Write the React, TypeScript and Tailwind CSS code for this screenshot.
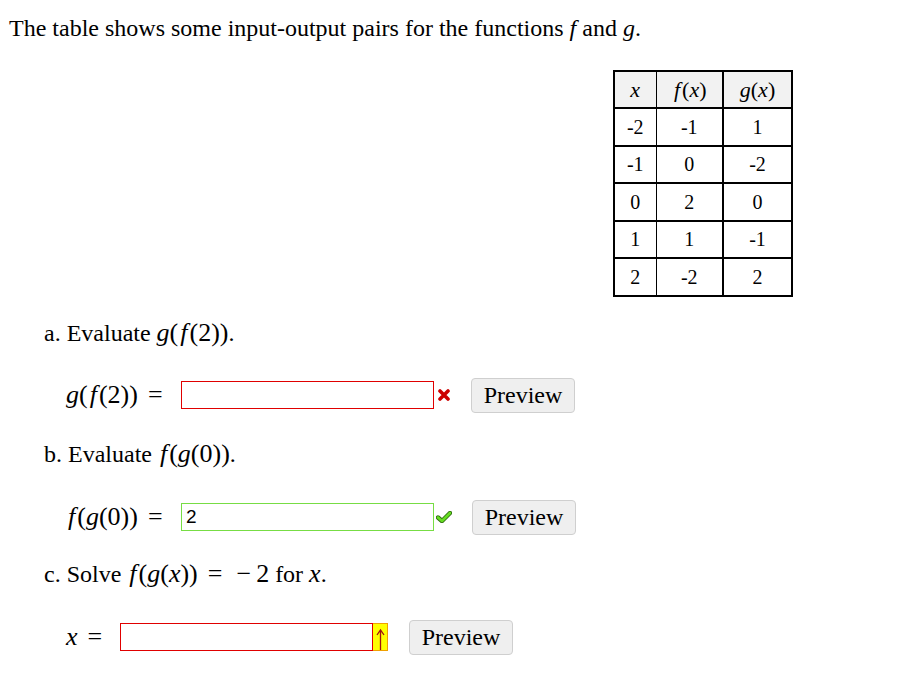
import React from 'react';

const serif = { fontFamily: '"Liberation Serif", "Times New Roman", serif' };
const sans = { fontFamily: '"Liberation Sans", Arial, sans-serif' };

// italic math variable
const V = ({ children }: { children: React.ReactNode }) => (
  <span className="italic">{children}</span>
);

// italic f with a bit of room, like TeX's f
const F = () => <span className="italic mx-[2px]">f</span>;

// inline math is set a touch larger than the text around it
const M = ({ children }: { children: React.ReactNode }) => (
  <span className="text-[26px] leading-none">{children}</span>
);

const rows = [
  ['-2', '-1', '1'],
  ['-1', '0', '-2'],
  ['0', '2', '0'],
  ['1', '1', '-1'],
  ['2', '-2', '2'],
];

function Cross() {
  return (
    <svg width="12" height="12" viewBox="0 0 12 12" className="shrink-0">
      <path d="M2 2 L10 10 M10 2 L2 10" stroke="#cc0000" strokeWidth="3.6" strokeLinecap="round" />
    </svg>
  );
}

function Check() {
  return (
    <svg width="16" height="12" viewBox="0 0 16 12" className="shrink-0">
      <path d="M2 6.5 L6 10 L14 2" fill="none" stroke="#2d6a0f" strokeWidth="4.4" strokeLinecap="round" strokeLinejoin="round" />
      <path d="M2 6.5 L6 10 L14 2" fill="none" stroke="#66dd22" strokeWidth="2.6" strokeLinecap="round" strokeLinejoin="round" />
    </svg>
  );
}

function PreviewButton({ ml }: { ml: string }) {
  return (
    <button
      className={`${ml} h-[35px] w-[104px] rounded-[4px] border border-[#cfcfcf] bg-[#efefef] text-[24px] text-black leading-none`}
      style={serif}
    >
      Preview
    </button>
  );
}

export default function App() {
  return (
    <div className="min-h-screen bg-white text-black text-[24px]" style={serif}>
      <p className="pl-[9px] pt-[13px] leading-[30px]">
        The table shows some input-output pairs for the functions <V>f</V> and <V>g</V>.
      </p>

      <div className="flex justify-end pr-[121px] mt-[27px]">
        <table className="border-collapse border-2 border-black text-[20px] text-center">
          <thead>
            <tr className="bg-[#f2f2f2] h-[37px] text-[22px]">
              <th className="font-normal w-[42px] border-r border-black"><V>x</V></th>
              <th className="font-normal w-[67px] border-r-2 border-black"><F />(<V>x</V>)</th>
              <th className="font-normal w-[69px]"><V>g</V>(<V>x</V>)</th>
            </tr>
          </thead>
          <tbody>
            {rows.map((r, i) => (
              <tr key={i} className="h-[37.5px] border-t-2 border-black">
                <td className="border-r border-black">{r[0]}</td>
                <td className="border-r-2 border-black">{r[1]}</td>
                <td>{r[2]}</td>
              </tr>
            ))}
          </tbody>
        </table>
      </div>

      <div className="pl-[44px]">
        <p className="mt-[21px] leading-[30px]">
          a. Evaluate <M><V>g</V>(<F />(2))</M>.
        </p>
        <div className="mt-[30px] flex items-center pl-[22px] h-[35px]">
          <span className="w-[115px] whitespace-nowrap"><M><V>g</V>(<F />(2))<span className="ml-[10px]">=</span></M></span>
          <input className="w-[253px] h-[28px] border border-[#e00000] outline-none px-1" style={sans} />
          <span className="ml-[4px]"><Cross /></span>
          <PreviewButton ml="ml-[21px]" />
        </div>

        <p className="mt-[26px] leading-[30px]">
          b. Evaluate <M><F />(<V>g</V>(0))</M>.
        </p>
        <div className="mt-[31px] flex items-center pl-[22px] h-[35px]">
          <span className="w-[115px] whitespace-nowrap"><M><F />(<V>g</V>(0))<span className="ml-[10px]">=</span></M></span>
          <input
            defaultValue="2"
            className="w-[253px] h-[28px] border border-[#77dd44] outline-none px-[4px] text-[19px] text-black"
            style={sans}
          />
          <span className="ml-[2px]"><Check /></span>
          <PreviewButton ml="ml-[20px]" />
        </div>

        <p className="mt-[24px] leading-[30px] whitespace-nowrap">
          c. Solve <M><F />(<V>g</V>(<V>x</V>))<span className="mx-[10px]">=</span><span className="ml-[4px] mr-[5px]">−</span>2</M> for <M><V>x</V></M>.
        </p>
        <div className="mt-[31px] flex items-center pl-[22px] h-[35px]">
          <span className="w-[54px] whitespace-nowrap"><M><V>x</V><span className="ml-[10px]">=</span></M></span>
          <input className="w-[253px] h-[28px] border border-[#e00000] outline-none px-1" style={sans} />
          <span className="w-[15px] h-[28px] bg-[#ffff00] border border-[#f0a000] border-l-0 flex items-end justify-center">
            <svg width="9" height="22" viewBox="0 0 9 22">
              <path d="M4.5 22 V3 M1 7 L4.5 2 L8 7" fill="none" stroke="#a01010" strokeWidth="1.3" />
            </svg>
          </span>
          <PreviewButton ml="ml-[21px]" />
        </div>
      </div>
    </div>
  );
}
